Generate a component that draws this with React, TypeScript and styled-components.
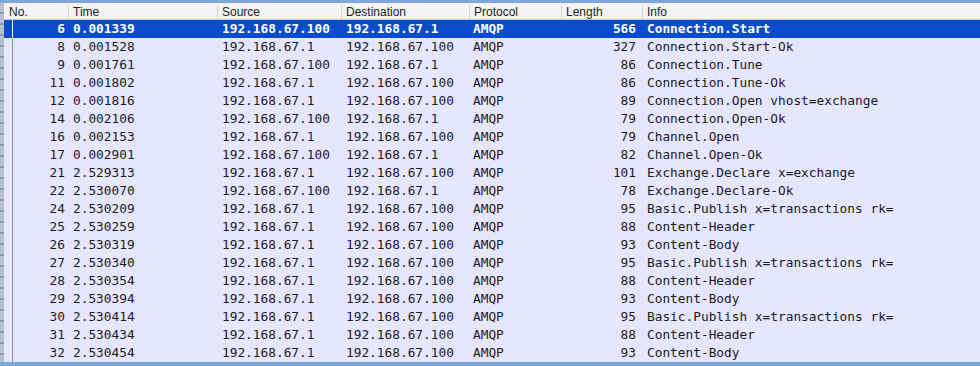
import styled, { createGlobalStyle } from 'styled-components'

const packets = [
  ['6', '0.001339', '192.168.67.100', '192.168.67.1', 'AMQP', '566', 'Connection.Start'],
  ['8', '0.001528', '192.168.67.1', '192.168.67.100', 'AMQP', '327', 'Connection.Start-Ok'],
  ['9', '0.001761', '192.168.67.100', '192.168.67.1', 'AMQP', '86', 'Connection.Tune'],
  ['11', '0.001802', '192.168.67.1', '192.168.67.100', 'AMQP', '86', 'Connection.Tune-Ok'],
  ['12', '0.001816', '192.168.67.1', '192.168.67.100', 'AMQP', '89', 'Connection.Open vhost=exchange'],
  ['14', '0.002106', '192.168.67.100', '192.168.67.1', 'AMQP', '79', 'Connection.Open-Ok'],
  ['16', '0.002153', '192.168.67.1', '192.168.67.100', 'AMQP', '79', 'Channel.Open'],
  ['17', '0.002901', '192.168.67.100', '192.168.67.1', 'AMQP', '82', 'Channel.Open-Ok'],
  ['21', '2.529313', '192.168.67.1', '192.168.67.100', 'AMQP', '101', 'Exchange.Declare x=exchange'],
  ['22', '2.530070', '192.168.67.100', '192.168.67.1', 'AMQP', '78', 'Exchange.Declare-Ok'],
  ['24', '2.530209', '192.168.67.1', '192.168.67.100', 'AMQP', '95', 'Basic.Publish x=transactions rk='],
  ['25', '2.530259', '192.168.67.1', '192.168.67.100', 'AMQP', '88', 'Content-Header'],
  ['26', '2.530319', '192.168.67.1', '192.168.67.100', 'AMQP', '93', 'Content-Body'],
  ['27', '2.530340', '192.168.67.1', '192.168.67.100', 'AMQP', '95', 'Basic.Publish x=transactions rk='],
  ['28', '2.530354', '192.168.67.1', '192.168.67.100', 'AMQP', '88', 'Content-Header'],
  ['29', '2.530394', '192.168.67.1', '192.168.67.100', 'AMQP', '93', 'Content-Body'],
  ['30', '2.530414', '192.168.67.1', '192.168.67.100', 'AMQP', '95', 'Basic.Publish x=transactions rk='],
  ['31', '2.530434', '192.168.67.1', '192.168.67.100', 'AMQP', '88', 'Content-Header'],
  ['32', '2.530454', '192.168.67.1', '192.168.67.100', 'AMQP', '93', 'Content-Body'],
]

const headers = ['No.', 'Time', 'Source', 'Destination', 'Protocol', 'Length', 'Info']
const COLS = '64px 149px 124px 128px 92px 81px 1fr'

const GlobalStyle = createGlobalStyle`
  html, body {
    margin: 0;
    padding: 0;
    background: #e7e6ff;
  }
`

const Window = styled.div`
  width: 980px;
  height: 366px;
  display: flex;
  flex-direction: column;
  overflow: hidden;
  border-top: 3px solid #7fa7d9;
  border-bottom: 4px solid #7ba8d9;
  box-sizing: border-box;
`

const Body = styled.div`
  flex: 1;
  display: flex;
  min-height: 0;
`

const Gutter = styled.div`
  width: 4px;
  flex-shrink: 0;
  background: repeating-linear-gradient(
    to bottom,
    #b7bfd0 0px,
    #b7bfd0 9px,
    #8f9cb8 9px,
    #8f9cb8 11px
  );
`

const Table = styled.div`
  flex: 1;
  display: flex;
  flex-direction: column;
`

const HeaderRow = styled.div`
  display: grid;
  grid-template-columns: ${COLS};
  height: 16px;
  background: #f4f4f4;
  border-bottom: 1px solid #c4c4c4;
  font-family: 'Liberation Sans', Arial, sans-serif;
  font-size: 12px;
  color: #222;
`

const HeaderCell = styled.div<{ $first?: boolean }>`
  display: flex;
  align-items: center;
  padding-left: ${({ $first }) => ($first ? '5px' : '4px')};
  border-left: ${({ $first }) => ($first ? 'none' : '1px solid #d6d6d6')};
  margin: 2px 0 0;
  line-height: 14px;
  white-space: nowrap;
`

const Row = styled.div<{ $selected?: boolean }>`
  display: grid;
  grid-template-columns: ${COLS};
  height: 18px;
  line-height: 18px;
  background: ${({ $selected }) => ($selected ? '#0b4ccd' : '#e7e6ff')};
  color: ${({ $selected }) => ($selected ? '#ffffff' : '#1b1b1b')};
  font-family: 'DejaVu Sans Mono', 'Liberation Mono', monospace;
  font-size: 12.8px;
  font-weight: ${({ $selected }) => ($selected ? 'bold' : 'normal')};
`

const Cell = styled.div<{ $right?: boolean; $pl?: number; $pr?: number }>`
  white-space: nowrap;
  overflow: hidden;
  text-align: ${({ $right }) => ($right ? 'right' : 'left')};
  padding-left: ${({ $pl }) => $pl ?? 0}px;
  padding-right: ${({ $pr }) => $pr ?? 0}px;
`

const NoCell = styled(Cell)<{ $selected?: boolean }>`
  background: linear-gradient(
    to right,
    transparent 8px,
    ${({ $selected }) => ($selected ? '#ffffff' : '#8d8d8d')} 8px,
    ${({ $selected }) => ($selected ? '#ffffff' : '#8d8d8d')} 9px,
    transparent 9px
  );
`

const Filler = styled.div`
  flex: 1;
  background: #e7e6ff;
`

export default function App() {
  return (
    <>
      <GlobalStyle />
      <Window>
        <Body>
          <Gutter />
          <Table>
            <HeaderRow>
              {headers.map((h, i) => (
                <HeaderCell key={h} $first={i === 0}>
                  {h}
                </HeaderCell>
              ))}
            </HeaderRow>
            {packets.map((p, i) => (
              <Row key={p[0]} $selected={i === 0}>
                <NoCell $right $pr={3} $selected={i === 0}>
                  {p[0]}
                </NoCell>
                <Cell $pl={5}>{p[1]}</Cell>
                <Cell $pl={5}>{p[2]}</Cell>
                <Cell $pl={5}>{p[3]}</Cell>
                <Cell $pl={4}>{p[4]}</Cell>
                <Cell $right $pr={6}>
                  {p[5]}
                </Cell>
                <Cell $pl={5}>{p[6]}</Cell>
              </Row>
            ))}
            <Filler />
          </Table>
        </Body>
      </Window>
    </>
  )
}
